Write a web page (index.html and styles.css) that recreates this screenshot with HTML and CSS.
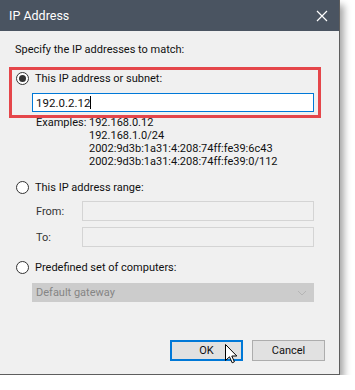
FILE: index.html
```html
<!DOCTYPE html>
<html lang="en">
<head>
<title>IP Address</title>
<link rel="stylesheet" href="styles.css">
</head>
<body>
<div class="window">
  <div class="titlebar">
    <span class="title">IP Address</span>
    <svg class="close" width="12" height="12" viewBox="0 0 12 12">
      <path d="M1 1 L11 11 M11 1 L1 11" stroke="#fff" stroke-width="1.2" fill="none"/>
    </svg>
  </div>
  <div class="content">
    <p class="prompt">Specify the IP addresses to match:</p>

    <div class="highlight">
      <div class="option"><span class="radio checked"></span>This IP address or subnet:</div>
      <div class="field active"><span class="value">192.0.2.12</span><span class="caret"></span></div>
    </div>

    <div class="examples">
      <span>Examples:</span>
      <div class="list">
        <div>192.168.0.12</div>
        <div>192.168.1.0/24</div>
        <div>2002:9d3b:1a31:4:208:74ff:fe39:6c43</div>
        <div>2002:9d3b:1a31:4:208:74ff:fe39:0/112</div>
      </div>
    </div>

    <div class="option range"><span class="radio"></span>This IP address range:</div>
    <div class="range-row">
      <span class="range-label">From:</span>
      <div class="field disabled"></div>
    </div>
    <div class="range-row to">
      <span class="range-label">To:</span>
      <div class="field disabled"></div>
    </div>

    <div class="option predefined"><span class="radio"></span>Predefined set of computers:</div>
    <div class="select">
      <span>Default gateway</span>
      <svg width="10" height="6" viewBox="0 0 10 6">
        <path d="M1 1 L5 5 L9 1" stroke="#b5b5b5" stroke-width="1" fill="none"/>
      </svg>
    </div>

    <div class="buttons">
      <div class="button default">OK</div>
      <div class="button">Cancel</div>
    </div>
  </div>

  <svg class="pointer" width="13" height="20" viewBox="0 0 13 20">
    <path d="M0.5 0.5 L0.5 16.5 L4.5 12.8 L7.2 18.8 L9.4 17.8 L6.8 12 L11.8 12 Z" fill="#fff" stroke="#000" stroke-width="1"/>
  </svg>
</div>
</body>
</html>
```

FILE: styles.css
```css
body {
  margin: 0;
  background: #fff;
  font-family: Roboto, "Noto Sans", Arial, sans-serif;
  font-size: 11px;
  color: #111;
}
.window {
  position: relative;
  width: 340px;
  height: 375px;
  box-sizing: border-box;
  background: #f0f0f0;
  border-right: 1px solid #5e5e5e;
  border-bottom: 1px solid #5e5e5e;
  box-shadow: 4px 5px 7px rgba(0, 0, 0, 0.35);
}
.titlebar {
  height: 31px;
  background: #4a5461;
  display: flex;
  align-items: center;
  justify-content: space-between;
  padding: 0 11px 0 9px;
}
.title {
  color: #fff;
  font-size: 12.5px;
}
.prompt {
  margin: 12px 0 0 15px;
  line-height: 14px;
}
.highlight {
  margin: 10px 0 0 9px;
  width: 312px;
  box-sizing: border-box;
  border: 3px solid #e5464a;
  padding: 1px 4px 3px 4px;
}
.option {
  display: flex;
  align-items: center;
  gap: 6px;
  height: 14px;
}
.radio {
  width: 13px;
  height: 13px;
  box-sizing: border-box;
  border: 1px solid #333;
  border-radius: 50%;
  background: #fff;
  display: flex;
  align-items: center;
  justify-content: center;
}
.radio.checked::after {
  content: "";
  width: 7px;
  height: 7px;
  border-radius: 50%;
  background: #333;
}
.field {
  box-sizing: border-box;
  height: 20px;
}
.field.active {
  margin: 8px 0 0 16px;
  width: 282px;
  height: 19px;
  background: #fff;
  border: 1px solid #0078d7;
  display: flex;
  align-items: center;
  padding-left: 3px;
  font-size: 11.5px;
}
.caret {
  width: 1px;
  height: 13px;
  background: #000;
}
.field.disabled {
  width: 232px;
  border: 1px solid #d4d4d4;
  background: #f0f0f0;
}
.examples {
  margin: -2px 0 0 36px;
  display: grid;
  grid-template-columns: 53px auto;
  line-height: 13px;
}
.option.range {
  margin: 12px 0 0 16px;
}
.range-row {
  margin: 7px 0 0 36px;
  display: flex;
  align-items: center;
}
.range-row.to {
  margin-top: 6px;
}
.range-label {
  width: 46px;
  color: #333;
}
.option.predefined {
  margin: 13px 0 0 16px;
}
.select {
  margin: 9px 0 0 32px;
  width: 282px;
  height: 19px;
  box-sizing: border-box;
  background: #cccccc;
  color: #858585;
  display: flex;
  align-items: center;
  justify-content: space-between;
  padding: 0 7px 0 4px;
}
.buttons {
  margin-top: 38px;
  display: flex;
  justify-content: flex-end;
  gap: 9px;
  padding-right: 14px;
}
.button {
  width: 73px;
  height: 21px;
  box-sizing: border-box;
  background: #e1e1e1;
  border: 1px solid #adadad;
  display: flex;
  align-items: center;
  justify-content: center;
}
.button.default {
  border: 2px solid #0078d7;
}
.pointer {
  position: absolute;
  left: 225px;
  top: 344px;
}
```
